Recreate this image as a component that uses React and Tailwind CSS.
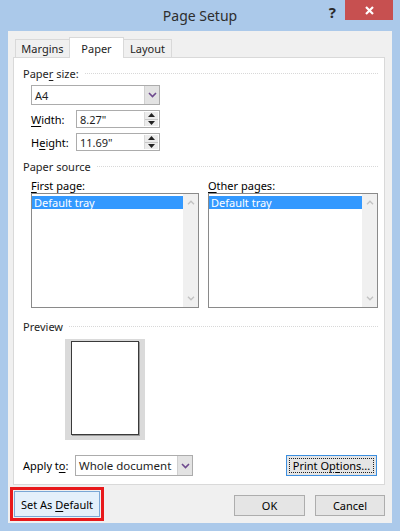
import React from "react";

const Chevron = ({ color = "#6e4a8e" }) => (
  <svg width="9" height="6" viewBox="0 0 9 6">
    <path d="M1 1l3.5 3.5L8 1" fill="none" stroke={color} strokeWidth="1.6" />
  </svg>
);

const U = ({ children }) => <span className="underline underline-offset-2">{children}</span>;

const Select = ({ value, className }) => (
  <div className={`flex border border-[#acacac] bg-white ${className}`}>
    <div className="flex-1 flex items-center pl-[3px] text-[#1e1e1e]">{value}</div>
    <div className="w-[15px] flex items-center justify-center bg-[#e3e3e3] border-l border-[#d0d0d0]">
      <Chevron />
    </div>
  </div>
);

const Spin = ({ value }) => (
  <div className="flex h-[18px] w-[84px] border border-[#acacac] bg-white">
    <div className="flex-1 flex items-center pl-[3px] text-[#1e1e1e]">{value}</div>
    <div className="w-[14px] flex flex-col border-l border-[#d9d9d9] bg-[#ececec] my-px mr-px">
      <div className="flex-1 flex items-center justify-center border-b border-[#c8c8c8]">
        <svg width="7" height="4" viewBox="0 0 7 4">
          <path d="M0 4L3.5 0L7 4Z" fill="#222" />
        </svg>
      </div>
      <div className="flex-1 flex items-center justify-center">
        <svg width="7" height="4" viewBox="0 0 7 4">
          <path d="M0 0L7 0L3.5 4Z" fill="#222" />
        </svg>
      </div>
    </div>
  </div>
);

const ListBox = ({ className }) => (
  <div className={`flex h-[115px] border border-[#8a8a8a] bg-white ${className}`}>
    <div className="flex-1 pt-[2px]">
      <div className="h-[13px] bg-[#3399ff] text-white leading-[13px] pl-[2px]">Default tray</div>
    </div>
    <div className="w-[15px] bg-[#f0f0f0] flex flex-col justify-between items-center py-[6px]">
      <svg width="8" height="5" viewBox="0 0 8 5">
        <path d="M1 4.2L4 1.2L7 4.2" fill="none" stroke="#c2c2c2" strokeWidth="1.4" />
      </svg>
      <svg width="8" height="5" viewBox="0 0 8 5">
        <path d="M1 0.8L4 3.8L7 0.8" fill="none" stroke="#c2c2c2" strokeWidth="1.4" />
      </svg>
    </div>
  </div>
);

const Header = ({ children }) => (
  <div className="flex items-center h-[16px] gap-[6px]">
    <span className="text-[#1e1e1e]">{children}</span>
    <div className="flex-1 border-t border-dotted border-[#d8d8d8]" />
  </div>
);

export default function App() {
  return (
    <div className="w-[400px] h-[531px] bg-[#abc9ea] flex flex-col font-['Noto_Sans',sans-serif] text-[11px] leading-none text-black">
      {/* title bar */}
      <div className="h-[31px] flex">
        <div className="flex-1" />
        <div className="flex items-center text-[14px] text-[#2e2e2e]">Page Setup</div>
        <div className="flex-1 flex justify-end items-start">
          <span className="mt-[5px] mr-[9px] text-[15px] font-bold text-[#2a2a2a]">?</span>
          <div className="w-[48px] h-[20px] mr-[7px] bg-[#c75050] flex items-center justify-center">
            <svg width="9" height="9" viewBox="0 0 9 9">
              <path d="M1 1L8 8M8 1L1 8" stroke="white" strokeWidth="2.2" />
            </svg>
          </div>
        </div>
      </div>

      {/* client */}
      <div className="mx-[8px] h-[492px] bg-[#f0f0f0] pt-[6px] flex flex-col">
        <div className="flex items-end h-[20px] ml-[7px] relative z-10">
          <div className="w-[55px] h-[18px] border border-b-0 border-[#d9d9d9] bg-[#f0f0f0] flex items-center justify-center text-[#1e1e1e]">Margins</div>
          <div className="w-[55px] h-[21px] -ml-px -mb-px border border-b-0 border-[#d9d9d9] bg-white flex items-center justify-center text-[#1e1e1e]">Paper</div>
          <div className="w-[49px] h-[18px] -ml-px border border-b-0 border-[#d9d9d9] bg-[#f0f0f0] flex items-center justify-center text-[#1e1e1e]">Layout</div>
        </div>

        <div className="ml-[5px] w-[372px] h-[428px] border border-[#d9d9d9] bg-white pl-[9px] pr-[6px] flex flex-col">
          <div className="mt-[7px]">
            <Header>
              Pape<U>r</U> size:
            </Header>
          </div>
          <Select value="A4" className="mt-[4px] ml-[8px] w-[129px] h-[20px]" />
          <div className="flex items-center mt-[5px] ml-[8px]">
            <span className="w-[45px]">
              <U>W</U>idth:
            </span>
            <Spin value={'8.27"'} />
          </div>
          <div className="flex items-center mt-[5px] ml-[8px]">
            <span className="w-[45px]">
              H<U>e</U>ight:
            </span>
            <Spin value={'11.69"'} />
          </div>

          <div className="mt-[7px]">
            <Header>Paper source</Header>
          </div>
          <div className="flex mt-[3px] ml-[8px] gap-[9px]">
            <div className="w-[168px] flex flex-col">
              <div className="h-[16px] flex items-center">
                <span>
                  <U>F</U>irst page:
                </span>
              </div>
              <ListBox />
            </div>
            <div className="flex-1 flex flex-col">
              <div className="h-[16px] flex items-center">
                <span>
                  <U>O</U>ther pages:
                </span>
              </div>
              <ListBox />
            </div>
          </div>

          <div className="mt-[10px]">
            <Header>Preview</Header>
          </div>
          <div className="mt-[5px] ml-[42px] w-[80px] h-[101px] bg-[#dadada] pt-[2px] pl-[6px]">
            <div className="w-[68px] h-[94px] bg-white border-[1.5px] border-[#3a3a3a] shadow-[1px_1px_0_#9a9a9a]" />
          </div>

          <div className="flex mt-[15px] h-[21px] items-stretch">
            <div className="w-[52px] flex items-center">
              <span>
                Apply t<U>o</U>:
              </span>
            </div>
            <Select value="Whole document" className="w-[118px] text-[11.5px]" />
            <div className="ml-auto mr-[1px] w-[91px] border border-[#3c8fe0] bg-[#e5e5e5] p-[2px]">
              <div className="h-full border border-dotted border-[#222] flex items-center justify-center">
                <span>
                  Print Op<U>t</U>ions...
                </span>
              </div>
            </div>
          </div>
        </div>

        {/* bottom buttons */}
        <div className="flex items-start mt-[2px] ml-[2px] mr-[7px]">
          <div className="border-[3px] border-[#e8191b] p-[1px]">
            <div className="w-[86px] h-[26px] border border-[#7aa7d6] bg-[#e4f0fb] flex items-center justify-center">
              <span>
                Set As <U>D</U>efault
              </span>
            </div>
          </div>
          <div className="ml-auto mt-[8px] w-[71px] h-[21px] border border-[#adadad] bg-[#e5e5e5] flex items-center justify-center">
            OK
          </div>
          <div className="ml-[10px] mt-[8px] w-[70px] h-[21px] border border-[#adadad] bg-[#e5e5e5] flex items-center justify-center">
            Cancel
          </div>
        </div>
      </div>
    </div>
  );
}
